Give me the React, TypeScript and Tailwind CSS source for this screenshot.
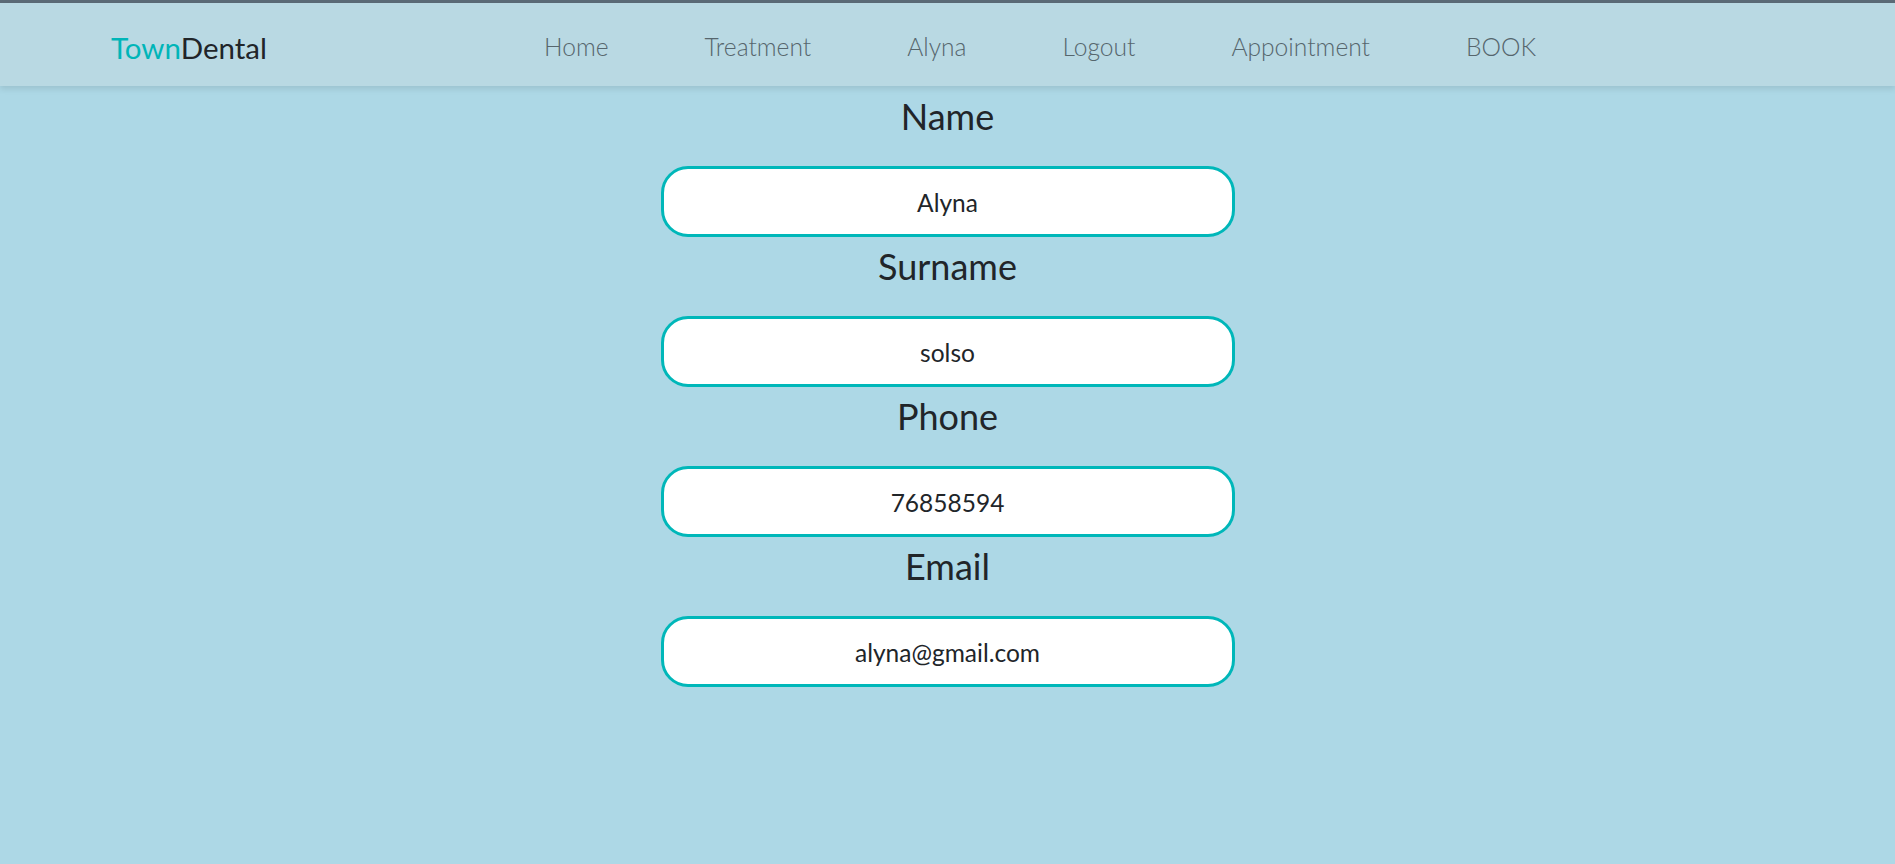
import React from "react";

const links = ["Home", "Treatment", "Alyna", "Logout", "Appointment", "BOOK"];
const fields = [
  { label: "Name", value: "Alyna" },
  { label: "Surname", value: "solso" },
  { label: "Phone", value: "76858594" },
  { label: "Email", value: "alyna@gmail.com" },
];

export default function App() {
  return (
    <div
      className="min-h-screen bg-[#add8e6]"
      style={{ fontFamily: "Lato, 'Open Sans', sans-serif" }}
    >
      <div className="h-[3px] bg-[#5b6b77]" />
      <nav className="relative z-10 flex h-[83px] items-center bg-[#b9d9e3] pt-[7px] shadow-[0_3px_6px_rgba(0,0,0,0.10)]">
        <div className="w-[544px] shrink-0 pl-[111px] text-[29.5px] leading-none">
          <span className="text-[#00b5b8]">Town</span>
          <span className="text-[#212529]">Dental</span>
        </div>
        <ul className="flex gap-[96px]">
          {links.map((l) => (
            <li key={l}>
              <a className="text-[24.6px] font-light leading-none text-[#56666d]">{l}</a>
            </li>
          ))}
        </ul>
      </nav>
      <main className="flex flex-col items-center pt-[9px]">
        {fields.map((f) => (
          <div key={f.label} className="flex flex-col items-center">
            <h3 className="mb-[29px] text-[36px] leading-[42px] text-[#212529]">{f.label}</h3>
            <div className="mb-[8px] flex h-[71px] w-[574px] items-center justify-center rounded-[27px] border-[3px] border-[#00b7b9] bg-white pt-[3px] text-[24.5px] text-[#212529]">
              {f.value}
            </div>
          </div>
        ))}
      </main>
    </div>
  );
}
